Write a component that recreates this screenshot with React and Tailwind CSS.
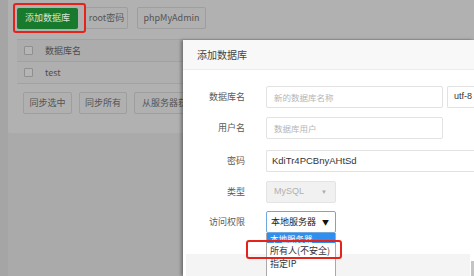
import React from 'react';

const font = "font-['Noto_Sans_CJK_SC','Noto_Sans',sans-serif]";

function DimButton({ children, className = '' }) {
  return (
    <div className={`h-[22px] flex items-center justify-center whitespace-nowrap overflow-hidden border border-[#9e9e9e] bg-[#b0b0b0] text-[#545454] text-[9px] rounded-[2px] ${className}`}>
      {children}
    </div>
  );
}

function Checkbox() {
  return <span className="w-[9px] h-[9px] border border-[#8f8f8f] bg-[#b5b5b5] rounded-[1px] block" />;
}

function Row({ label, children, className = '' }) {
  return (
    <div className={`flex items-center h-[22px] ${className}`}>
      <div className="w-[62px] text-right text-[9px] text-[#5a5a5a] shrink-0">{label}</div>
      <div className="ml-[21px] flex items-center gap-[4px] flex-1 min-w-0 h-full relative">{children}</div>
    </div>
  );
}

export default function App() {
  return (
    <div className={`relative w-[474px] h-[276px] overflow-hidden bg-[#aaaaaa] ${font}`}>
      {/* page behind the shade */}
      <div className="flex h-full">
        <div className="w-[8px] bg-[#a5a5a5] shrink-0" />
        <div className="flex-1 flex flex-col">
          <div className="h-[133px] bg-[#b1b1b1] rounded-b-[2px]">
            <div className="flex items-center pt-[7px] pl-[9px]">
              <div className="w-[61px] h-[21px] bg-[#177a2c] text-[#d8e6da] text-[9px] flex items-center justify-center rounded-[2px]">
                添加数据库
              </div>
              <DimButton className="ml-[7px] w-[43px] h-[20px]">root密码</DimButton>
              <DimButton className="ml-[9px] w-[69px] h-[20px]">phpMyAdmin</DimButton>
            </div>
            <div className="ml-[9px] mt-[10px] border-y border-[#a2a2a2]">
              <div className="h-[22px] flex items-center bg-[#acacac] border-b border-[#a2a2a2] pl-[7px]">
                <Checkbox />
                <span className="ml-[12px] text-[9px] text-[#4e4e4e]">数据库名</span>
              </div>
              <div className="h-[21px] flex items-center pl-[7px] bg-[#afafaf]">
                <Checkbox />
                <span className="ml-[12px] text-[9px] text-[#4e4e4e]">test</span>
              </div>
            </div>
            <div className="flex mt-[8px] ml-[15px] gap-[7px]">
              <DimButton className="w-[49px]">同步选中</DimButton>
              <DimButton className="w-[48px]">同步所有</DimButton>
              <DimButton className="w-[64px] justify-start pl-[7px]">从服务器获取</DimButton>
            </div>
          </div>
        </div>
      </div>

      {/* annotation around add button */}
      <div className="absolute left-[13px] top-[3px] w-[73px] h-[30px] border-2 border-[#e5231b] rounded-[3px]" />

      {/* modal */}
      <div className="absolute left-[183px] top-[40px] right-0 bottom-0 bg-white flex flex-col shadow-[-2px_0_3px_rgba(0,0,0,0.35)]">
        <div className="h-[30px] bg-[#f8f8f8] border-b border-[#ececec] flex items-center pl-[14px] text-[10px] text-[#444]">
          添加数据库
        </div>
        <div className="pt-[16px]">
          <Row label="数据库名">
            <div className="w-[177px] shrink-0 h-full border border-[#e2e2e2] rounded-[2px] flex items-center pl-[7px] text-[8.5px] text-[#b5b5b5]">
              新的数据库名称
            </div>
            <div className="flex-1 min-w-0 h-full border border-[#e2e2e2] border-r-0 rounded-l-[2px] flex items-center pl-[6px] text-[9px] text-[#333] whitespace-nowrap overflow-hidden font-['Liberation_Sans',sans-serif]">
              utf-8
            </div>
          </Row>
          <Row label="用户名" className="mt-[9px]">
            <div className="w-[177px] h-full border border-[#e2e2e2] rounded-[2px] flex items-center pl-[7px] text-[8.5px] text-[#b5b5b5]">
              数据库用户
            </div>
          </Row>
          <Row label="密码" className="mt-[11px]">
            <div className="flex-1 h-full border border-[#e2e2e2] border-r-0 rounded-l-[2px] flex items-center pl-[5px] text-[9.5px] text-[#333] font-['Liberation_Sans',sans-serif]">
              KdiTr4PCBnyAHtSd
            </div>
          </Row>
          <Row label="类型" className="mt-[9px]">
            <div className="w-[70px] h-full border border-[#e4e4e4] bg-[#f1f1f1] rounded-[2px] flex items-center justify-between pl-[7px] pr-[8px] text-[9px] text-[#b0b0b0] font-['Liberation_Sans',sans-serif]">
              <span>MySQL</span>
              <span className="text-[6px] text-[#aaa]">▼</span>
            </div>
          </Row>
          <Row label="访问权限" className="mt-[8px]">
            <div className="w-[70px] h-full border border-[#6fa7dc] rounded-[2px] flex items-center justify-between pl-[4px] pr-[6px] text-[9px] text-[#222]">
              <span>本地服务器</span>
              <span className="text-[7px] text-[#111]">▼</span>
            </div>
            {/* open list */}
            <div className="absolute left-0 top-full w-[70px] h-[60px] bg-white border-x border-[#a9a9a9] z-10 text-[9px] text-[#333]">
              <div className="h-[10px] bg-[#2e8ff0] text-white text-[8.5px] leading-[10px] pl-[3px] overflow-hidden">本地服务器</div>
              <div className="h-[15px] flex items-center pl-[3px]">所有人(不安全)</div>
              <div className="h-[12px] flex items-center pl-[3px]">指定IP</div>
            </div>
          </Row>
        </div>
        <div className="mt-[21px] ml-[3px] mr-[4px] flex-1 bg-[#f4f4f4]" />
        <div className="absolute right-0 top-[221px] bottom-0 w-[3px] bg-[#c4c4c4]" />
      </div>

      {/* annotation around open option */}
      <div className="absolute left-[246px] top-[240px] w-[96px] h-[19px] border-2 border-[#e5231b] rounded-[3px] z-20" />
    </div>
  );
}
